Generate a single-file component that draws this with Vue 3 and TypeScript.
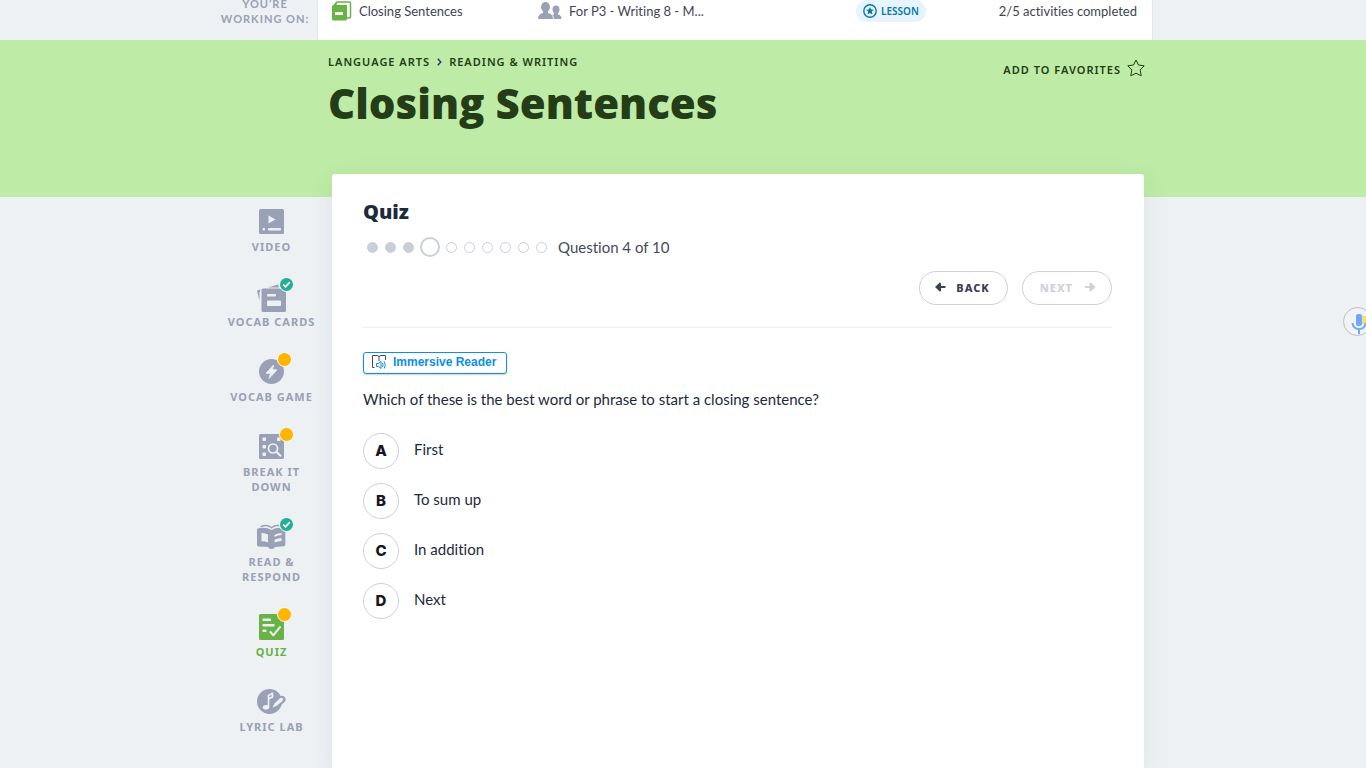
<script setup lang="ts">
type Badge = 'done' | 'assigned' | null

interface Activity {
  id: string
  label: string
  badge: Badge
  near?: boolean
  active?: boolean
}

const activities: Activity[] = [
  { id: 'video', label: 'Video', badge: null },
  { id: 'cards', label: 'Vocab Cards', badge: 'done' },
  { id: 'game', label: 'Vocab Game', badge: 'assigned', near: true },
  { id: 'break', label: 'Break It Down', badge: 'assigned' },
  { id: 'read', label: 'Read & Respond', badge: 'done' },
  { id: 'quiz', label: 'Quiz', badge: 'assigned', near: true, active: true },
  { id: 'lyric', label: 'Lyric Lab', badge: null },
]

const total = 10
const current = 4

const choices = [
  { letter: 'A', text: 'First' },
  { letter: 'B', text: 'To sum up' },
  { letter: 'C', text: 'In addition' },
  { letter: 'D', text: 'Next' },
]
</script>

<template>
  <div class="page">
    <header class="topbar">
      <div class="container topbar-row">
        <p class="working">You’re working on:</p>
        <div class="assignment">
          <a href="#" class="assignment-topic">
            <svg width="20" height="20" viewBox="0 0 20 20" aria-hidden="true">
              <path d="M4 3.500V2.500Q4 1 5.500 1H17Q18.500 1 18.500 2.500V15.500Q18.500 17 17 17H15" fill="none" stroke="#69b245" stroke-width="1.500" />
              <path d="M0 5.500L4.500 0.500V4H15V6H0Z" fill="#69b245" />
              <rect x="0" y="4.500" width="15" height="15" rx="1.500" fill="#69b245" />
              <rect x="3" y="11" width="8" height="3" fill="#fff" />
            </svg>
            Closing Sentences
          </a>
          <span class="assignment-class">
            <svg width="24" height="18" viewBox="0 0 24 18" fill="#9aa0b5" aria-hidden="true">
              <ellipse cx="7.500" cy="5" rx="4.500" ry="5" />
              <path d="M5 8H10V11Q15 12 15 17H0Q0 12 5 11Z" />
              <ellipse cx="18" cy="7.500" rx="3.500" ry="4" />
              <path d="M16 10H20V12.500Q23.500 13 23.500 17H16Q16 14 14 12.800L16 12.500Z" />
            </svg>
            For P3 - Writing 8 - M...
          </span>
          <span class="lesson">
            <svg width="14" height="14" viewBox="0 0 14 14" aria-hidden="true">
              <circle cx="7" cy="7" r="6.200" fill="none" stroke="#0777a8" stroke-width="1.400" />
              <path d="M7 3L8.200 5.400L10.900 5.700L8.900 7.600L9.400 10.400L7 9L4.600 10.400L5.100 7.600L3.100 5.700L5.800 5.400Z" fill="#0777a8" />
            </svg>
            Lesson
          </span>
          <span class="completed">2/5 activities completed</span>
        </div>
      </div>
    </header>

    <section class="hero">
      <div class="container hero-row">
        <div>
          <nav class="crumbs" aria-label="Breadcrumb">
            <a href="#">Language Arts</a>
            <svg width="5" height="8" viewBox="0 0 5 8" aria-hidden="true">
              <path d="M0.800 0.800L3.800 4L0.800 7.200" fill="none" stroke="#2b2d76" stroke-width="1.400" />
            </svg>
            <a href="#">Reading &amp; Writing</a>
          </nav>
          <h1>Closing Sentences</h1>
        </div>
        <button type="button" class="favorite">
          Add to Favorites
          <svg width="18" height="18" viewBox="0 0 18 18" aria-hidden="true">
            <path d="M9 1L11.500 6L17.200 6.800L13.200 10.800L14.200 16.800L9 14.200L3.800 16.800L4.800 10.800L0.800 6.800L6.500 6Z" fill="none" stroke="#243c17" stroke-width="1" stroke-linejoin="round" />
          </svg>
        </button>
      </div>
    </section>

    <div class="container body">
      <nav class="activities" aria-label="Activities">
        <a v-for="a in activities" :key="a.id" href="#" class="activity" :class="{ active: a.active }">
          <span class="icon">
            <svg v-if="a.id === 'video'" width="30" height="28" viewBox="0 0 30 28" aria-hidden="true">
              <rect x="3" y="0" width="25" height="25" rx="1.500" fill="currentColor" />
              <path d="M12.500 6.500L19.500 10.500L12.500 14.500Z" fill="#edf1f4" />
              <rect x="6.500" y="19" width="2.500" height="2.500" rx="0.800" fill="#edf1f4" />
              <rect x="12" y="19" width="13" height="2.500" rx="1" fill="#edf1f4" />
            </svg>
            <svg v-else-if="a.id === 'cards'" width="30" height="28" viewBox="0 0 30 28" fill="currentColor" aria-hidden="true">
              <path d="M1 6.500L4.500 5.500L3.500 9V17ZM12 3.500L22 0.500L23 3.500Z" />
              <path d="M5.500 6Q5.500 4.500 7 4.500H30V26.500Q30 28 28.500 28H7Q5.500 28 5.500 26.500Z" />
              <rect x="11" y="10" width="9" height="2.500" rx="0.800" fill="#edf1f4" />
              <rect x="11" y="16.500" width="14" height="5.500" rx="0.800" fill="#edf1f4" />
            </svg>
            <svg v-else-if="a.id === 'game'" width="30" height="28" viewBox="0 0 30 28" aria-hidden="true">
              <circle cx="15.500" cy="12.500" r="12.500" fill="currentColor" />
              <path d="M17.500 6L10 14.200L14.500 14.400L13 19.500L21 11L16.500 10.600Z" fill="#edf1f4" stroke="#edf1f4" stroke-width="0.800" stroke-linejoin="round" />
            </svg>
            <svg v-else-if="a.id === 'break'" width="30" height="28" viewBox="0 0 30 28" aria-hidden="true">
              <rect x="3" y="0" width="25" height="25" rx="1.500" fill="currentColor" />
              <g fill="#edf1f4">
                <rect x="6.500" y="3.500" width="3.500" height="3.500" rx="0.800" />
                <rect x="6.500" y="11" width="3.500" height="3.500" rx="0.800" />
                <rect x="6.500" y="18.500" width="3.500" height="3.500" rx="0.800" />
                <rect x="21" y="3.500" width="3.500" height="3.500" rx="0.800" />
              </g>
              <circle cx="17" cy="14.500" r="4.500" fill="none" stroke="#edf1f4" stroke-width="1.700" />
              <path d="M20.300 17.800L24.500 21.800" stroke="#edf1f4" stroke-width="2" stroke-linecap="round" />
            </svg>
            <svg v-else-if="a.id === 'read'" width="30" height="28" viewBox="0 0 30 28" fill="none" aria-hidden="true">
              <path d="M4.500 2.800Q11 0 15.500 3.800Q20 0 26.500 2.800" stroke="currentColor" stroke-width="1.500" />
              <path d="M1 6Q1 4.500 2.500 4.300Q10 2.500 15.500 6Q21 2.500 28 4.300Q29.300 4.500 29.300 6V21Q29.300 22 28 22.200L19 23Q18.500 25 15.500 25Q12.500 25 12 23L2.500 22.500Q1 22.200 1 21Z" fill="currentColor" />
              <path d="M5.500 9Q9 8.700 12 10.500V18.500Q9 17 5.500 17.300ZM18.500 11Q22 9 25.500 9V11Q22 11 18.500 13ZM18.500 15.800Q22 14 25.500 14V17Q22 17 18.500 18.500Z" fill="#edf1f4" />
            </svg>
            <svg v-else-if="a.id === 'quiz'" width="30" height="28" viewBox="0 0 30 28" aria-hidden="true">
              <rect x="3" y="0" width="25" height="26" rx="1.500" fill="currentColor" />
              <path d="M7.500 5.800H14M7.500 11.300H17.500M7.500 16.800H9.500" stroke="#edf1f4" stroke-width="2.400" stroke-linecap="round" />
              <path d="M14.500 18L17.300 21.300L24 13" fill="none" stroke="#edf1f4" stroke-width="2" stroke-linecap="round" stroke-linejoin="round" />
            </svg>
            <svg v-else width="30" height="28" viewBox="0 0 30 28" aria-hidden="true">
              <circle cx="13.500" cy="12.500" r="12.500" fill="currentColor" />
              <path d="M17 18L26 10.500" stroke="currentColor" stroke-width="7" stroke-linecap="round" />
              <path d="M16.500 18.500L18.500 14.500L24 9.300Q26 8 27 9.500Q27.500 11 26 12.500L20.500 17Z" fill="#edf1f4" />
              <path d="M12.500 18V6.500L16.500 4.200V8L12.500 10" fill="none" stroke="#edf1f4" stroke-width="1.700" stroke-linejoin="round" />
              <ellipse cx="10" cy="18.200" rx="3.200" ry="2.300" fill="#edf1f4" />
            </svg>
            <span v-if="a.badge" class="badge" :class="[a.badge, { near: a.near }]">
              <svg v-if="a.badge === 'done'" width="9" height="7" viewBox="0 0 9 7" aria-hidden="true">
                <path d="M1.200 3.500L3.500 5.800L7.800 1.200" fill="none" stroke="#fff" stroke-width="1.700" />
              </svg>
            </span>
          </span>
          <span class="activity-label">{{ a.label }}</span>
        </a>
      </nav>

      <main class="card">
        <h2>Quiz</h2>
        <div class="progress">
          <ol class="dots" aria-hidden="true">
            <li v-for="n in total" :key="n" :class="{ answered: n < current, current: n === current }"></li>
          </ol>
          <span>Question {{ current }} of {{ total }}</span>
        </div>
        <div class="pager">
          <button type="button" class="pill">
            <svg width="11" height="10" viewBox="0 0 11 10" aria-hidden="true">
              <path d="M0 5L5 0.200L6 1.500V8.500L5 9.800Z" fill="currentColor" />
              <path d="M4 5H10.500" stroke="currentColor" stroke-width="2" />
            </svg>
            Back
          </button>
          <button type="button" class="pill" disabled>
            Next
            <svg width="11" height="10" viewBox="0 0 11 10" aria-hidden="true">
              <path d="M10.500 5L5.500 0.200L4.500 1.500V8.500L5.500 9.800Z" fill="currentColor" />
              <path d="M0 5H7" stroke="currentColor" stroke-width="2" />
            </svg>
          </button>
        </div>
        <div class="question">
          <button type="button" class="reader">
            <svg width="16" height="16" viewBox="0 0 16 16" fill="none" aria-hidden="true">
              <path d="M3.500 13.500H1.500V1.500H6Q7.500 1.500 8 3Q8.500 1.500 10 1.500H14.500V6M8 3V7" stroke="#444b57" stroke-width="1" />
              <path d="M5.500 9.500H7.500L10 7.500V14.500L7.500 12.500H5.500ZM11.500 9Q12.800 11 11.500 13M13.200 7.500Q15.500 11 13.200 14.500" stroke="#0c8fe8" stroke-width="1" />
            </svg>
            Immersive Reader
          </button>
          <p class="prompt">Which of these is the best word or phrase to start a closing sentence?</p>
          <div class="choices">
            <button v-for="c in choices" :key="c.letter" type="button" class="choice">
              <span class="letter">{{ c.letter }}</span>
              <span class="choice-text">{{ c.text }}</span>
            </button>
          </div>
        </div>
      </main>
    </div>

    <button type="button" class="mic" aria-label="Dictate">
      <svg width="26" height="26" viewBox="0 0 26 26" fill="none" aria-hidden="true">
        <rect x="15" y="7" width="9" height="8" fill="#f9dc80" />
        <rect x="12" y="5" width="6" height="12" rx="2" fill="#6eaaf5" />
        <path d="M8.500 14Q9 20 15 20Q21 20 21.500 14M15 20V25" stroke="#6eaaf5" stroke-width="2" />
      </svg>
    </button>
  </div>
</template>

<style>
body {
  margin: 0;
  background: #edf1f4;
}
</style>

<style scoped>
.page {
  display: flex;
  flex-direction: column;
  height: 100vh;
  overflow: hidden;
  background: #edf1f4;
  color: #1c2b3c;
  font-family: "Noto Sans", "Open Sans", sans-serif;
  font-variant-ligatures: none;
}

.container {
  box-sizing: border-box;
  width: 100%;
  max-width: 940px;
  margin: 0 auto;
}

a {
  color: inherit;
  text-decoration: none;
}

button {
  margin: 0;
  padding: 0;
  border: 0;
  background: none;
  color: inherit;
  font-family: inherit;
  font-variant-ligatures: none;
}

svg {
  display: block;
  flex: none;
}

.topbar {
  flex: none;
  height: 40px;
}

.topbar-row {
  display: grid;
  grid-template-columns: 104px 1fr;
  height: 40px;
}

.working {
  margin: -4px 0 0;
  color: #9aa0b5;
  font-family: Lato, "Noto Sans", sans-serif;
  font-size: 11px;
  font-weight: 700;
  line-height: 15px;
  letter-spacing: 1px;
  text-align: center;
  text-transform: uppercase;
}

.assignment {
  display: grid;
  grid-template-columns: 206px 318px 1fr auto;
  align-items: center;
  padding: 0 15px 18px 14px;
  border: solid #e1e6ea;
  border-width: 0 1px;
  background: #fff;
  color: #3e4555;
  font-family: Lato, "Noto Sans", sans-serif;
  font-size: 13px;
}

.assignment-topic,
.assignment-class {
  display: flex;
  align-items: center;
  gap: 7px;
  white-space: nowrap;
}

.lesson {
  display: flex;
  align-items: center;
  justify-self: start;
  gap: 4px;
  height: 22px;
  padding: 0 7px;
  border-radius: 11px;
  background: #e6f5fd;
  color: #0777a8;
  font-family: "Noto Sans", sans-serif;
  font-size: 10px;
  font-weight: 600;
  text-transform: uppercase;
}

.hero {
  flex: none;
  height: 157px;
  background: #beeca6;
  color: #243c17;
}

.hero-row {
  display: flex;
  align-items: flex-start;
  justify-content: space-between;
  padding: 14px 8px 0 115px;
}

.crumbs {
  display: flex;
  align-items: center;
  gap: 7px;
  font-size: 11px;
  font-weight: 600;
  line-height: 16px;
  letter-spacing: 1px;
  text-transform: uppercase;
}

h1 {
  margin: 5px 0 0;
  font-family: "Open Sans", "Noto Sans", sans-serif;
  font-size: 42px;
  font-weight: 800;
  line-height: 56px;
}

.favorite {
  display: flex;
  align-items: flex-end;
  gap: 6px;
  margin-top: 5px;
  font-size: 11px;
  font-weight: 600;
  line-height: 14px;
  letter-spacing: 1px;
  text-transform: uppercase;
}

.body {
  display: grid;
  flex: 1;
  grid-template-columns: 116px 1fr;
  gap: 3px;
  margin-top: -23px;
  padding-right: 9px;
}

.activities {
  display: flex;
  flex-direction: column;
  gap: 30px;
  padding-top: 35px;
  color: #9aa0b5;
}

.activity {
  display: flex;
  flex-direction: column;
  align-items: center;
}

.activity.active {
  color: #69b245;
}

.icon {
  position: relative;
  height: 30px;
}

.badge {
  position: absolute;
  top: -7px;
  left: 23px;
  display: flex;
  align-items: center;
  justify-content: center;
  box-sizing: border-box;
  width: 15px;
  height: 15px;
  border: 1px solid #fff;
  border-radius: 50%;
}

.badge.near {
  left: 21px;
}

.badge.done {
  background: #24ae96;
}

.badge.assigned {
  background: #ffb400;
}

.activity-label {
  max-width: 90px;
  padding-left: 1px;
  font-size: 11px;
  font-weight: 700;
  line-height: 15px;
  letter-spacing: 1px;
  text-align: center;
  text-transform: uppercase;
}

.card {
  padding: 24px 32px 0 31px;
  border-radius: 3px 3px 0 0;
  background: #fff;
  box-shadow: 0 4px 24px rgba(30, 60, 80, 0.08);
}

h2 {
  margin: 0;
  font-family: "Open Sans", "Noto Sans", sans-serif;
  font-size: 20px;
  font-weight: 800;
  line-height: 28px;
}

.progress {
  display: flex;
  align-items: center;
  gap: 7px;
  margin-top: 11px;
  color: #444b5a;
  font-family: Lato, "Noto Sans", sans-serif;
  font-size: 15px;
  line-height: 20px;
}

.dots {
  display: flex;
  align-items: center;
  margin: 0;
  padding: 0 0 0 1px;
  list-style: none;
}

.dots li {
  box-sizing: border-box;
  width: 11px;
  height: 11px;
  margin: 0 4px 0 3px;
  border: 1px solid #c9ced9;
  border-radius: 50%;
}

.dots .answered {
  background: #c9ced9;
}

.dots .current {
  width: 20px;
  height: 20px;
  margin: 0 3px 0 2px;
  border-width: 2px;
}

.pager {
  display: flex;
  justify-content: flex-end;
  gap: 14px;
  margin-top: 14px;
  padding-bottom: 22px;
  border-bottom: 1px solid #eceef1;
}

.pill {
  display: flex;
  align-items: center;
  gap: 10px;
  box-sizing: border-box;
  height: 34px;
  padding: 0 17px 2px 15px;
  border: 1px solid #cdd0dc;
  border-radius: 17px;
  color: #3a4150;
  font-size: 11px;
  font-weight: 800;
  letter-spacing: 1px;
  text-transform: uppercase;
}

.pill:disabled {
  gap: 12px;
  padding: 0 15px 2px 17px;
  color: #cdd1da;
}

.reader {
  display: flex;
  align-items: center;
  gap: 6px;
  box-sizing: border-box;
  height: 22px;
  margin-top: 24px;
  padding: 0 10px 2px 7px;
  border: 1px solid #0c8fe8;
  border-radius: 3px;
  box-shadow: 0 1px 2px rgba(0, 0, 0, 0.2);
  color: #0c8fe8;
  font-family: "Liberation Sans", sans-serif;
  font-size: 12px;
  font-weight: 700;
}

.prompt {
  margin: 14px 0 0;
  font-family: Lato, "Noto Sans", sans-serif;
  font-size: 15px;
  line-height: 22px;
}

.choices {
  display: flex;
  flex-direction: column;
  gap: 14px;
  margin-top: 23px;
}

.choice {
  display: flex;
  align-items: flex-start;
  gap: 15px;
  color: #1c2b3c;
  font-family: Lato, "Noto Sans", sans-serif;
  font-size: 15px;
  line-height: 32px;
  text-align: left;
}

.letter {
  display: flex;
  align-items: center;
  justify-content: center;
  box-sizing: border-box;
  width: 36px;
  height: 36px;
  border: 1px solid #cdd0dc;
  border-radius: 50%;
  color: #171424;
  font-family: Inter, "Noto Sans", sans-serif;
  font-weight: 800;
}

.mic {
  position: fixed;
  top: 307px;
  right: -6px;
  box-sizing: border-box;
  width: 29px;
  height: 29px;
  border: 1px solid #bdbfc2;
  border-radius: 50%;
  background: #f1f3f5;
}
</style>
